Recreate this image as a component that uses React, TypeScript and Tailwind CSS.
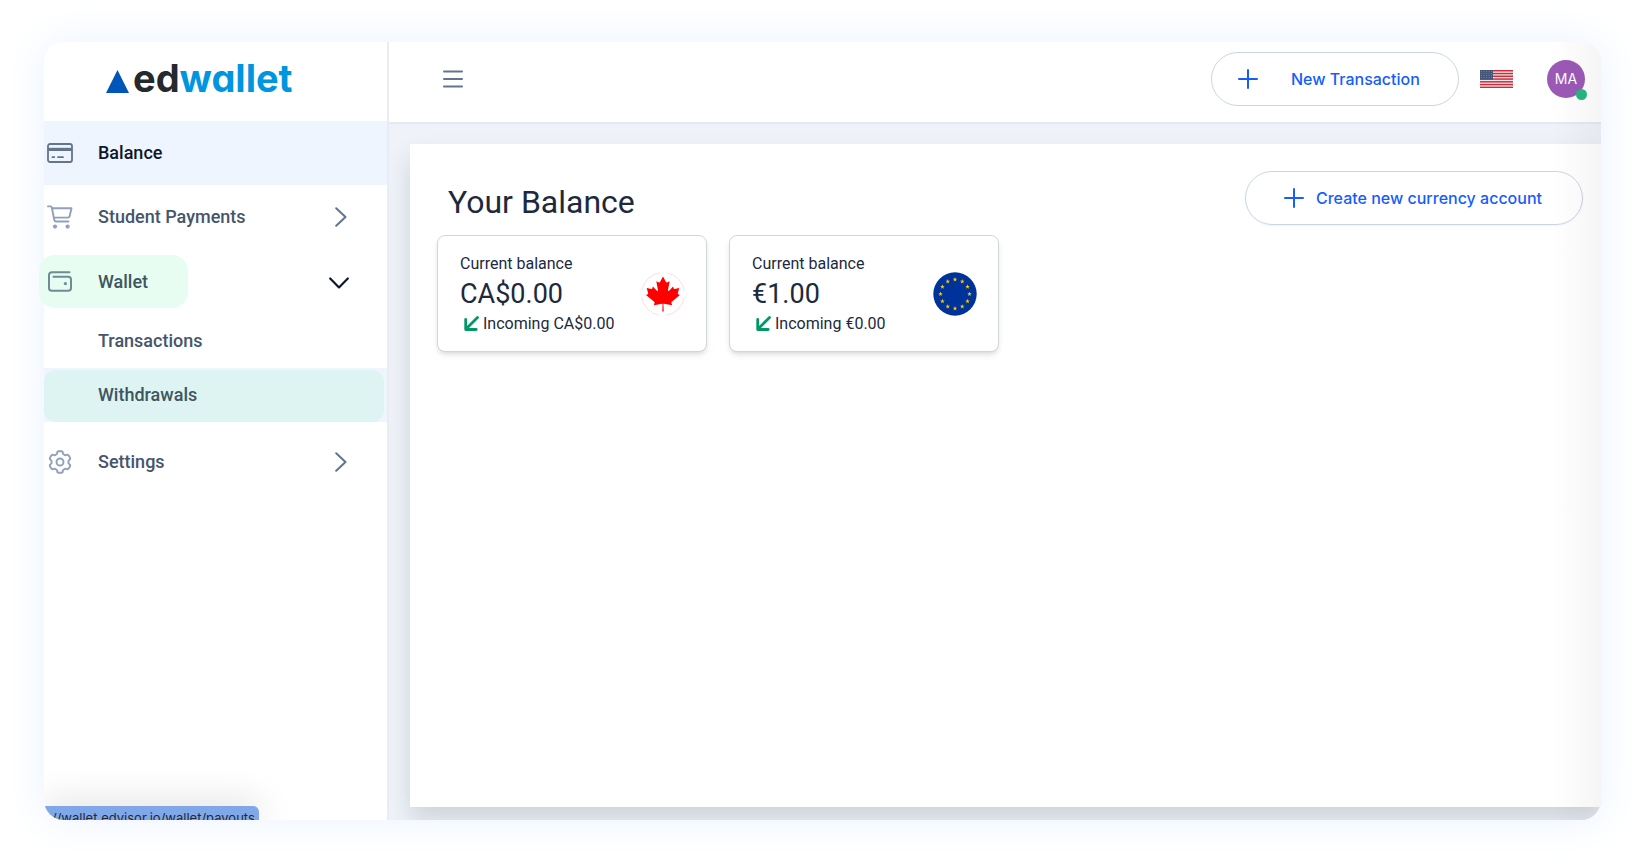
import type { ReactNode } from "react";

const starAngles = [0, 30, 60, 90, 120, 150, 180, 210, 240, 270, 300, 330];

// six wide teeth, each one rising from the body and falling back to it
const gearPoints = [0, 60, 120, 180, 240, 300]
  .flatMap((base) => [
    [base - 21, 8.6],
    [base - 14, 10.6],
    [base - 7, 10.9],
    [base + 7, 10.9],
    [base + 14, 10.6],
    [base + 21, 8.6],
  ])
  .map(([angle, r]) => {
    const a = (angle * Math.PI) / 180;
    return `${(12 + r * Math.sin(a)).toFixed(2)},${(12 - r * Math.cos(a)).toFixed(2)}`;
  })
  .join(" ");

function CardIcon() {
  return (
    <svg viewBox="0 0 26 20" className="h-5 w-[26px] text-slate-500" fill="none" stroke="currentColor" strokeWidth="1.8" strokeLinecap="round">
      <rect x="1" y="1" width="24" height="18" rx="2" />
      <path d="M1 6.400h24" strokeWidth="3.200" strokeLinecap="butt" />
      <path d="M5.400 14.200h1.800M11 14.200h5" />
    </svg>
  );
}

function CartIcon() {
  return (
    <svg viewBox="0 0 26 24" className="h-6 w-[26px] text-slate-400" fill="none" stroke="currentColor" strokeWidth="1.900" strokeLinecap="round" strokeLinejoin="round">
      <path d="M1 1.400h2.400a1.400 1.400 0 0 1 1.400 1.100L7.300 15a1.900 1.900 0 0 0 1.900 1.500h12.300M5 3.200h19.500l-1.900 8a1.800 1.800 0 0 1-1.700 1.400H6.800" />
      <circle cx="8" cy="21.600" r="2.100" fill="currentColor" stroke="none" />
      <circle cx="20.600" cy="21.600" r="2.100" fill="currentColor" stroke="none" />
    </svg>
  );
}

function WalletIcon() {
  return (
    <svg viewBox="0 0 24 21" className="h-[21px] w-6 text-[#6f8b93]" fill="none" stroke="currentColor" strokeWidth="2" strokeLinecap="round">
      <path d="M21.500 1.200H4A3 3 0 0 0 1 4v13a2.800 2.800 0 0 0 2.800 2.800h16.400A2.800 2.800 0 0 0 23 17V8.600a2.800 2.800 0 0 0-2.800-2.800H5.400" />
      <circle cx="17.400" cy="12.600" r="1.600" fill="currentColor" stroke="none" />
    </svg>
  );
}

function GearIcon() {
  return (
    <svg viewBox="0 0 24 24" className="size-6 text-slate-400" fill="none" stroke="currentColor" strokeWidth="1.900" strokeLinejoin="round">
      <polygon points={gearPoints} />
      <circle cx="12" cy="12" r="3.500" />
    </svg>
  );
}

function ChevronRight() {
  return (
    <svg viewBox="0 0 12 20" className="h-5 w-3 text-slate-500" fill="none" stroke="currentColor" strokeWidth="2" strokeLinecap="round" strokeLinejoin="round">
      <path d="M1.200 1.200 10.500 10l-9.300 8.800" />
    </svg>
  );
}

function ChevronDown() {
  return (
    <svg viewBox="0 0 20 12" className="mt-[2px] h-3 w-5 text-slate-900" fill="none" stroke="currentColor" strokeWidth="2.200" strokeLinecap="round" strokeLinejoin="round">
      <path d="M1.200 1.500 10 10.400l8.800-8.900" />
    </svg>
  );
}

function PlusIcon() {
  return (
    <svg viewBox="0 0 20 20" className="size-5" fill="none" stroke="currentColor" strokeWidth="2" strokeLinecap="round">
      <path d="M10 1v18M1 10h18" />
    </svg>
  );
}

function UsFlag() {
  return (
    <svg viewBox="0 0 33 18" className="h-[18px] w-[33px]">
      <rect width="33" height="18" fill="#f6e6e8" />
      {[0, 1, 2, 3, 4, 5, 6].map((i) => (
        <rect key={i} y={i * 2.77} width="33" height="1.5" fill="#c5303e" />
      ))}
      <rect width="13" height="9.700" fill="#46557a" />
      <g fill="#9aa4bd">
        {[1.5, 3.5, 5.5, 7.5].map((y) =>
          [1.5, 4, 6.5, 9, 11.5].map((x) => <circle key={`${x}-${y}`} cx={x} cy={y} r="0.4" />)
        )}
      </g>
    </svg>
  );
}

function CanadaFlag() {
  return (
    <svg viewBox="0 0 44 44" className="size-11">
      <circle cx="22" cy="22" r="21.500" fill="#fff" stroke="#fbdfe2" strokeWidth="1" strokeDasharray="26 7.770" strokeDashoffset="-4" />
      <path
        fill="#f00"
        d="M22 4.500l-3 5.600c-.35.600-.95.550-1.550.200l-2.150-1.100 1.600 8.500c.35 1.550-.75 1.550-1.280.880l-3.750-4.200-.600 2.150c-.070.280-.380.570-.830.500l-4.750-1 1.250 4.550c.270 1 .470 1.420-.270 1.690l-1.670.800 8.200 6.650c.320.250.490.700.370 1.110l-.710 2.350 8.100-1.440c.270 0 .620.150.620.460L21.300 39.500h1.400l-.280-7.300c0-.310.310-.460.580-.460l8.100 1.440-.710-2.350c-.120-.410.050-.860.370-1.110l8.200-6.650-1.670-.800c-.740-.270-.540-.690-.270-1.690l1.250-4.550-4.750 1c-.450.070-.760-.220-.830-.500l-.600-2.150-3.750 4.200c-.530.670-1.630.670-1.280-.880l1.600-8.500-2.150 1.100c-.600.350-1.200.400-1.550-.200z"
      />
    </svg>
  );
}

function EuFlag() {
  return (
    <svg viewBox="0 0 44 44" className="size-11">
      <circle cx="22" cy="22" r="21.700" fill="#039" />
      {starAngles.map((angle) => (
        <polygon
          key={angle}
          fill="#fc0"
          points="0,-2.400 0.560,-0.780 2.280,-0.740 0.910,0.300 1.410,1.940 0,0.960 -1.410,1.940 -0.910,0.300 -2.280,-0.740 -0.560,-0.780"
          transform={`translate(${22 + 14.500 * Math.sin((angle * Math.PI) / 180)} ${22 - 14.500 * Math.cos((angle * Math.PI) / 180)})`}
        />
      ))}
    </svg>
  );
}

function BalanceCard({ amount, incoming, flag }: { amount: string; incoming: string; flag: ReactNode }) {
  return (
    <article className="flex h-[117px] w-[270px] items-center justify-between rounded-lg border border-gray-300 bg-white pr-[21px] pl-[22px] text-slate-800 shadow-md">
      <div>
        <p className="text-base leading-6">Current balance</p>
        <p className="text-[27px] leading-9">{amount}</p>
        <p className="flex items-center gap-1 pl-1 text-base leading-6">
          <svg viewBox="0 0 15 15" className="size-[15px] text-emerald-600" fill="none" stroke="currentColor" strokeWidth="2.800" strokeLinecap="round" strokeLinejoin="round">
            <path d="M13.500 1.500 2 13M1.700 3.500v10h10.500" />
          </svg>
          Incoming {incoming}
        </p>
      </div>
      {flag}
    </article>
  );
}

export default function App() {
  return (
    <div className="h-screen min-h-[600px] bg-white px-11 pt-[42px] pb-[47px] font-[Roboto,sans-serif]">
      <div className="relative flex h-full rounded-[20px] shadow-[0_0_40px_4px_#edf4ff]">
        <aside className="flex w-[345px] shrink-0 flex-col rounded-l-[20px] border-r-2 border-[#e8edf4] bg-white">
          <a href="#" className="flex h-[79px] items-center gap-1 pb-2 pl-[62px]">
            <svg viewBox="0 0 23 23" className="mt-2 size-[23px]">
              <path d="M11.500 0 23 23H0z" fill="#0055b8" />
            </svg>
            <span className="font-[Inter,sans-serif] text-[38px] leading-[44px] font-bold text-[#25282d] [font-feature-settings:'cv11']">
              ed<span className="text-[#0095df]">wallet</span>
            </span>
          </a>
          <nav className="text-lg font-medium text-slate-600">
            <a href="#" className="flex h-16 items-center bg-[#eef5ff] text-slate-900">
              <span className="flex w-[54px] pl-[3px]"><CardIcon /></span>
              Balance
            </a>
            <button type="button" className="flex h-16 w-full items-center pr-10">
              <span className="flex w-[54px] pl-[3px]"><CartIcon /></span>
              Student Payments
              <span className="ml-auto"><ChevronRight /></span>
            </button>
            <button type="button" className="flex h-[65px] w-full items-center justify-between pr-[38px]">
              <span className="-ml-[5px] flex h-[53px] w-[149px] items-center rounded-2xl bg-[#e7fdf1] pl-[5px] text-[#40565e]">
                <span className="flex w-[54px] pl-1"><WalletIcon /></span>
                Wallet
              </span>
              <ChevronDown />
            </button>
            <a href="#" className="flex h-[54px] items-center pl-[54px]">Transactions</a>
            <div className="bg-[#eef5ff] pt-[2px] pr-[3px]">
              <a href="#" className="flex h-[52px] items-center rounded-xl bg-[#def4f2] pb-[2px] pl-[54px] text-[#40565e]">Withdrawals</a>
            </div>
            <button type="button" className="mt-2 flex h-16 w-full items-center pr-10">
              <span className="flex w-[54px] pl-1"><GearIcon /></span>
              Settings
              <span className="ml-auto"><ChevronRight /></span>
            </button>
          </nav>
        </aside>

        <div className="flex min-w-0 grow flex-col overflow-hidden rounded-r-[20px] bg-[#eff3f9]">
          <header className="flex h-[82px] shrink-0 items-center border-b-2 border-[#e5eaf2] bg-white pr-4 pb-[6px] pl-[54px]">
            <button type="button" aria-label="Toggle menu" className="text-slate-500">
              <svg viewBox="0 0 20 18" className="h-[18px] w-5" stroke="currentColor" strokeWidth="2" strokeLinecap="round">
                <path d="M1 1.500h18M1 9h18M1 16.500h18" />
              </svg>
            </button>
            <button type="button" className="ml-auto flex h-[54px] w-[248px] items-center gap-[33px] rounded-full border border-slate-300 pl-[26px] font-[Inter,sans-serif] text-base font-medium text-blue-600">
              <PlusIcon />
              New Transaction
            </button>
            <button type="button" aria-label="Language" className="ml-[21px]"><UsFlag /></button>
            <button type="button" className="relative ml-[34px] size-[38px] rounded-full bg-[#9b59b6] font-[Inter,sans-serif] text-sm text-white">
              MA
              <span className="absolute -right-[2px] -bottom-[2px] size-[11px] rounded-full bg-[#29b682]" />
            </button>
          </header>

          <main className="grow pt-5 pb-[13px] pl-[21px]">
            <section className="h-full bg-white px-[18px] pt-[27px] shadow-[0_14px_24px_rgba(15,23,42,0.14)]">
              <div className="flex items-start justify-between pl-5">
                <h1 className="pt-[13px] text-[32px] leading-9 text-slate-800">Your Balance</h1>
                <button type="button" className="flex h-[54px] w-[338px] items-center gap-3 rounded-full border border-slate-300 pl-[38px] font-[Inter,sans-serif] text-base font-medium text-blue-600 shadow-xs">
                  <PlusIcon />
                  Create new currency account
                </button>
              </div>
              <div className="mt-[10px] flex flex-wrap gap-[22px] pl-[9px]">
                <BalanceCard amount="CA$0.00" incoming="CA$0.00" flag={<CanadaFlag />} />
                <BalanceCard amount="€1.00" incoming="€0.00" flag={<EuFlag />} />
              </div>
            </section>
          </main>
        </div>

        <div className="pointer-events-none absolute inset-0 overflow-hidden rounded-[20px]">
          <div className="absolute inset-y-0 right-0 w-12 bg-linear-to-l from-black/4 to-transparent" />
          <div className="absolute bottom-0 left-0 h-[14px] w-[215px] rounded-tr-md bg-[#80a8e8] pt-1 pl-2 font-[Inter,sans-serif] text-[13px] leading-4 text-slate-800 shadow-[0_0_36px_rgba(0,0,0,0.22)]">
            //wallet.edvisor.io/wallet/payouts
          </div>
        </div>
      </div>
    </div>
  );
}
